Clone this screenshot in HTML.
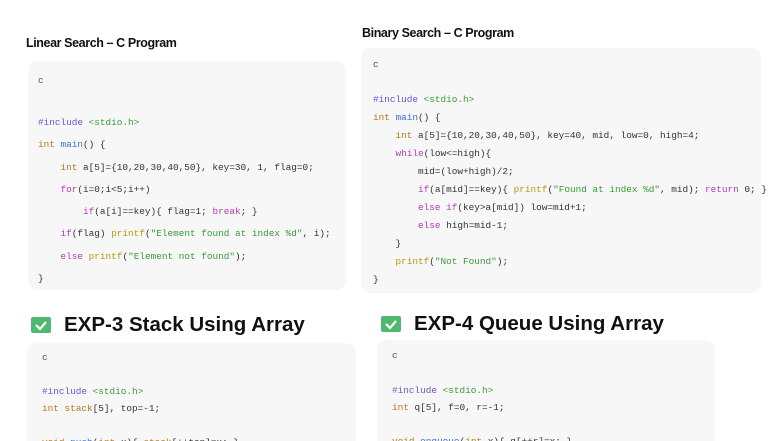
<!DOCTYPE html>
<html><head><meta charset="utf-8"><style>
html,body{margin:0;width:784px;height:441px;overflow:hidden}
body{background:#fff;position:relative;font-family:"Liberation Sans",sans-serif;color:#111}
.h{position:absolute;font-weight:bold;font-size:12.5px;letter-spacing:-0.4px}
.box{position:absolute;background:#f7f7f7;border-radius:10px}
.c{position:absolute;font-family:"Liberation Mono","DejaVu Sans Mono",monospace;font-size:9.4px;color:#333;white-space:pre}
.k{color:#b03cb8}.t{color:#b07a1e}.f{color:#3b6fd6}.s{color:#3a9a3a}.p{color:#6b55d6}.y{color:#b39a10}
.hh{position:absolute;font-size:20.5px;font-weight:bold;color:#111}
.chk{position:absolute;width:20px;height:16px;background:#4fba6f;border-radius:2px}
</style></head><body>
<div class="h" style="left:26px;top:36px">Linear Search – C Program</div>
<div class="box" style="left:28px;top:61px;width:318px;height:229px"></div>
<div class="c" style="left:38px;top:75px;color:#555">c</div>
<div class="c" style="left:38px;top:112px;line-height:22.3px"><span class="p">#include</span> <span class="s">&lt;stdio.h&gt;</span>
<span class="t">int</span> <span class="f">main</span>() {
    <span class="t">int</span> a[5]={10,20,30,40,50}, key=30, 1, flag=0;
    <span class="k">for</span>(i=0;i&lt;5;i++)
        <span class="k">if</span>(a[i]==key){ flag=1; <span class="k">break</span>; }
    <span class="k">if</span>(flag) <span class="y">printf</span>(<span class="s">"Element found at index %d"</span>, i);
    <span class="k">else</span> <span class="y">printf</span>(<span class="s">"Element not found"</span>);
}</div>
<div class="h" style="left:362px;top:26px">Binary Search – C Program</div>
<div class="box" style="left:361px;top:48px;width:400px;height:245px"></div>
<div class="c" style="left:373px;top:59px;color:#555">c</div>
<div class="c" style="left:373px;top:91px;line-height:18px"><span class="p">#include</span> <span class="s">&lt;stdio.h&gt;</span>
<span class="t">int</span> <span class="f">main</span>() {
    <span class="t">int</span> a[5]={10,20,30,40,50}, key=40, mid, low=0, high=4;
    <span class="k">while</span>(low&lt;=high){
        mid=(low+high)/2;
        <span class="k">if</span>(a[mid]==key){ <span class="y">printf</span>(<span class="s">"Found at index %d"</span>, mid); <span class="k">return</span> 0; }
        <span class="k">else if</span>(key&gt;a[mid]) low=mid+1;
        <span class="k">else</span> high=mid-1;
    }
    <span class="y">printf</span>(<span class="s">"Not Found"</span>);
}</div>
<div class="chk" style="left:31px;top:317px"><svg width="20" height="16"><path d="M5 8 L9 12 L15 5" stroke="#fff" stroke-width="2.2" fill="none"/></svg></div>
<div class="hh" style="left:64px;top:313px">EXP-3 Stack Using Array</div>
<div class="box" style="left:27px;top:343px;width:329px;height:110px"></div>
<div class="c" style="left:42px;top:352px;color:#555">c</div>
<div class="c" style="left:42px;top:383px;line-height:17px"><span class="p">#include</span> <span class="s">&lt;stdio.h&gt;</span>
<span class="t">int</span> <span class="t">stack</span>[5], top=-1;

<span class="t">void</span> <span class="f">push</span>(<span class="t">int</span> x){ <span class="t">stack</span>[++top]=x; }</div>
<div class="chk" style="left:381px;top:316px"><svg width="20" height="16"><path d="M5 8 L9 12 L15 5" stroke="#fff" stroke-width="2.2" fill="none"/></svg></div>
<div class="hh" style="left:414px;top:312px">EXP-4 Queue Using Array</div>
<div class="box" style="left:377px;top:340px;width:338px;height:110px"></div>
<div class="c" style="left:392px;top:350px;color:#555">c</div>
<div class="c" style="left:392px;top:382px;line-height:17px"><span class="p">#include</span> <span class="s">&lt;stdio.h&gt;</span>
<span class="t">int</span> q[5], f=0, r=-1;

<span class="t">void</span> <span class="f">enqueue</span>(<span class="t">int</span> x){ q[++r]=x; }</div>
</body></html>
